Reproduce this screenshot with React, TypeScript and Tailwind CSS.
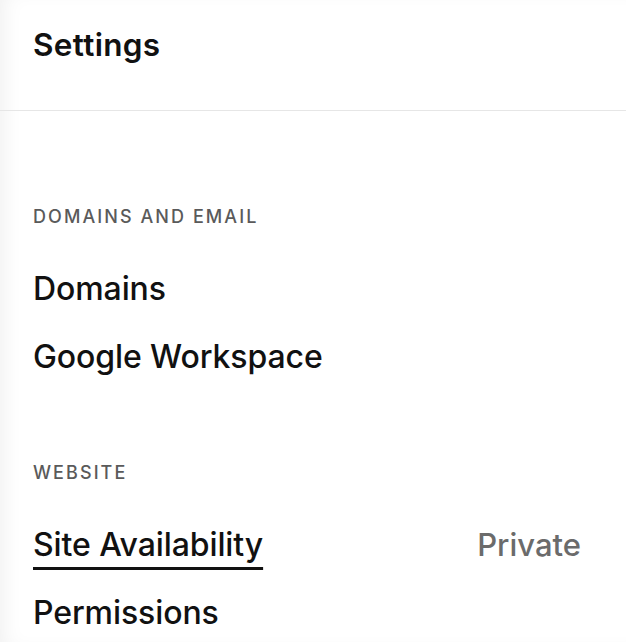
import React from 'react';

type Item = { label: string; value?: string; active?: boolean };

const sections: { title: string; items: Item[] }[] = [
    {
        title: 'Domains and Email',
        items: [{ label: 'Domains' }, { label: 'Google Workspace' }],
    },
    {
        title: 'Website',
        items: [{ label: 'Site Availability', value: 'Private', active: true }, { label: 'Permissions' }],
    },
];

const App = () => {
    return (
        <div
            className="w-full h-[642px] overflow-hidden bg-white text-[#111111] shadow-[inset_14px_0_22px_-12px_rgba(0,0,0,0.07)]"
            style={{ fontFamily: 'Inter, "Noto Sans", sans-serif' }}
        >
            {/* Header */}
            <div className="h-[111px] border-b-[1.5px] border-[#e6e6e6] pl-[33px] pt-[25px]">
                <h1 className="text-[31.5px] leading-[40px] font-semibold tracking-[0.01em]">Settings</h1>
            </div>

            {/* Sections */}
            <div className="pl-[33px] pr-[45px]">
                {sections.map((section, i) => (
                    <div key={section.title} className={i === 0 ? 'pt-[94px]' : 'pt-[70px]'}>
                        <div className="text-[18px] leading-[24px] font-medium uppercase tracking-[0.115em] text-[#5a5a5a]">
                            {section.title}
                        </div>
                        <div className="mt-[26px] flex flex-col">
                            {section.items.map((item) => (
                                <div key={item.label} className="h-[68px] flex items-center justify-between">
                                    <span
                                        className={`text-[32px] leading-[36px] font-medium tracking-[-0.003em] ${item.active
                                            ? 'underline decoration-[3px] underline-offset-[11px] decoration-[#111111]'
                                            : ''
                                            }`}
                                    >
                                        {item.label}
                                    </span>
                                    {item.value && (
                                        <span className="text-[31px] leading-[36px] font-medium text-[#6b6b6b]">
                                            {item.value}
                                        </span>
                                    )}
                                </div>
                            ))}
                        </div>
                    </div>
                ))}
            </div>
        </div>
    );
};

export default App;
